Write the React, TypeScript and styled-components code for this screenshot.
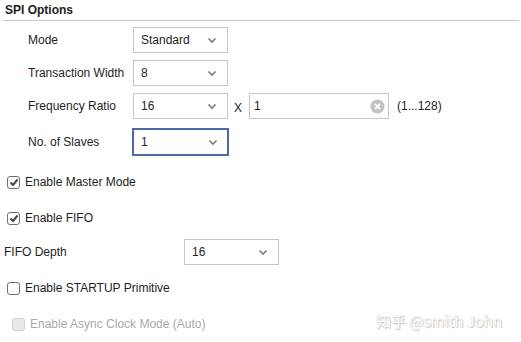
import { createGlobalStyle, styled } from "styled-components";

const GlobalStyle = createGlobalStyle`
  html, body {
    margin: 0;
    padding: 0;
    background: #ffffff;
  }
  body {
    font-family: "Liberation Sans", Arial, sans-serif;
    font-size: 12px;
    color: #1e1e1e;
  }
`;

const Page = styled.div`
  position: relative;
  width: 521px;
  height: 342px;
  overflow: hidden;
  display: flex;
  flex-direction: column;
`;

const Header = styled.div`
  margin-left: 3px;
  margin-right: 2px;
  height: 20px;
  line-height: 20px;
  padding-left: 2px;
  font-weight: bold;
  border-bottom: 1px solid #c9c9c9;
`;

const Options = styled.div`
  margin-top: 6px;
  padding-left: 28px;
  display: flex;
  flex-direction: column;
`;

const Row = styled.div<{ $gap?: number }>`
  display: flex;
  align-items: center;
  margin-top: ${(p) => p.$gap ?? 0}px;
`;

const Label = styled.span<{ $width: number }>`
  width: ${(p) => p.$width}px;
  flex-shrink: 0;
`;

const Select = styled.div<{ $focused?: boolean }>`
  box-sizing: border-box;
  width: ${(p) => (p.$focused ? 97 : 95)}px;
  height: ${(p) => (p.$focused ? 28 : 26)}px;
  margin-left: ${(p) => (p.$focused ? -1 : 0)}px;
  border: ${(p) => (p.$focused ? "2px solid #4a6ba8" : "1px solid #c6c6c6")};
  padding-left: 7px;
  padding-right: ${(p) => (p.$focused ? 9 : 10)}px;
  display: flex;
  align-items: center;
  justify-content: space-between;
  background: #fff;
`;

const TextBox = styled.div`
  box-sizing: border-box;
  width: 140px;
  height: 26px;
  border: 1px solid #c6c6c6;
  padding: 0 3px 0 4px;
  display: flex;
  align-items: center;
  justify-content: space-between;
`;

const Times = styled.span`
  margin: 0 7px 0 6px;
  padding-top: 3px;
`;

const Hint = styled.span`
  margin-left: 8px;
`;

const CheckRow = styled.label<{ $gap: number; $indent: number; $disabled?: boolean }>`
  display: flex;
  align-items: center;
  height: 20px;
  margin-top: ${(p) => p.$gap}px;
  padding-left: ${(p) => p.$indent}px;
  color: ${(p) => (p.$disabled ? "#a9a9a9" : "#1e1e1e")};
`;

const Box = styled.span<{ $disabled?: boolean }>`
  box-sizing: border-box;
  width: 13px;
  height: 13px;
  margin-right: 5px;
  border: 1px solid ${(p) => (p.$disabled ? "#cfcfcf" : "#707070")};
  border-radius: 3px;
  background: ${(p) => (p.$disabled ? "#e8e8e8" : "#fff")};
  display: flex;
  align-items: center;
  justify-content: center;
`;

const DepthRow = styled.div`
  display: flex;
  align-items: center;
  margin-top: 11px;
  padding-left: 4px;
`;

const Watermark = styled.div`
  position: absolute;
  left: 376px;
  top: 310px;
  font-family: "Noto Sans CJK SC", "Liberation Sans", sans-serif;
  font-size: 15px;
  color: #fafafa;
  text-shadow: 1px 1px 1px #c4c4c4, -0.5px -0.5px 0 #e0e0e0;
  white-space: nowrap;
`;

function Chevron() {
  return (
    <svg width="10" height="7" viewBox="0 0 10 7">
      <path d="M1.5 1.5 L5 5 L8.5 1.5" fill="none" stroke="#7a7a7a" strokeWidth="1.6" />
    </svg>
  );
}

function Clear() {
  return (
    <svg width="15" height="15" viewBox="0 0 15 15">
      <circle cx="7.5" cy="7.5" r="7" fill="#c2c2c2" />
      <path d="M5 5 L10 10 M10 5 L5 10" stroke="#fff" strokeWidth="1.8" />
    </svg>
  );
}

function Check() {
  return (
    <svg width="10" height="9" viewBox="0 0 10 9">
      <path d="M1.5 4.5 L4 7 L8.5 1.5" fill="none" stroke="#444" strokeWidth="2" />
    </svg>
  );
}

function Dropdown({ value, focused }: { value: string; focused?: boolean }) {
  return (
    <Select $focused={focused}>
      <span>{value}</span>
      <Chevron />
    </Select>
  );
}

function CheckItem({
  label,
  checked,
  disabled,
  gap,
  indent,
}: {
  label: string;
  checked?: boolean;
  disabled?: boolean;
  gap: number;
  indent: number;
}) {
  return (
    <CheckRow $gap={gap} $indent={indent} $disabled={disabled}>
      <Box $disabled={disabled}>{checked && <Check />}</Box>
      {label}
    </CheckRow>
  );
}

export default function App() {
  return (
    <Page>
      <GlobalStyle />
      <Header>SPI Options</Header>
      <Options>
        <Row>
          <Label $width={105}>Mode</Label>
          <Dropdown value="Standard" />
        </Row>
        <Row $gap={7}>
          <Label $width={105}>Transaction Width</Label>
          <Dropdown value="8" />
        </Row>
        <Row $gap={7}>
          <Label $width={105}>Frequency Ratio</Label>
          <Dropdown value="16" />
          <Times>X</Times>
          <TextBox>
            <span>1</span>
            <Clear />
          </TextBox>
          <Hint>(1...128)</Hint>
        </Row>
        <Row $gap={9}>
          <Label $width={105}>No. of Slaves</Label>
          <Dropdown value="1" focused />
        </Row>
      </Options>
      <CheckItem label="Enable Master Mode" checked gap={16} indent={7} />
      <CheckItem label="Enable FIFO" checked gap={16} indent={7} />
      <DepthRow>
        <Label $width={180}>FIFO Depth</Label>
        <Dropdown value="16" />
      </DepthRow>
      <CheckItem label="Enable STARTUP Primitive" gap={13} indent={7} />
      <CheckItem label="Enable Async Clock Mode (Auto)" disabled gap={16} indent={12} />
      <Watermark>知乎 @smith John</Watermark>
    </Page>
  );
}
